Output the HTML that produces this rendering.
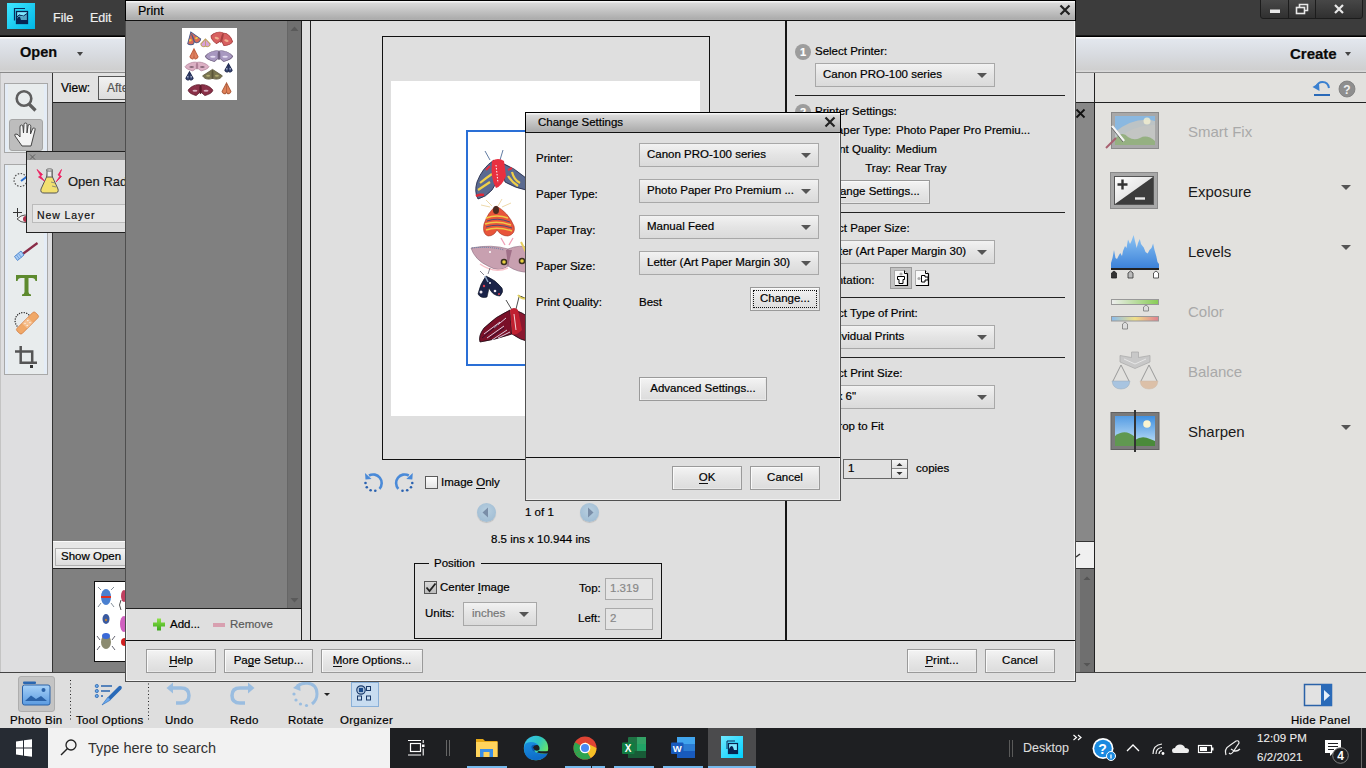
<!DOCTYPE html>
<html><head><meta charset="utf-8">
<style>
*{box-sizing:border-box;margin:0;padding:0}
html,body{width:1366px;height:768px;overflow:hidden;background:#dcdcdc;font-family:"Liberation Sans",sans-serif;color:#000;-webkit-text-stroke:0.2px currentColor}
.a{position:absolute}
.t{position:absolute;white-space:nowrap;line-height:1}
.btn{position:absolute;border:1px solid #9a9a9a;box-shadow:inset 1px 1px 0 #fafafa,inset -1px -1px 0 #e8e8e8;background:linear-gradient(#f4f4f4,#e6e6e6 50%,#dcdcdc);font-size:11.5px;text-align:center;color:#000;line-height:1}
.dd{position:absolute;border:1px solid #a8a8a8;background:linear-gradient(#f2f2f2,#e4e4e4 50%,#dadada);font-size:11.5px;color:#000;line-height:1}
.dd .v{position:absolute;left:7px;top:5px;white-space:nowrap}
.arr{position:absolute;width:0;height:0;border-left:5px solid transparent;border-right:5px solid transparent;border-top:5px solid #555}
.sep{position:absolute;height:1px;background:#222}
u{text-decoration:none;border-bottom:1px solid #111}
</style></head><body>
<svg width="0" height="0" style="position:absolute"><defs>
<path id="mw" d="M0 -0.7 C-0.3 -0.9 -0.8 -0.5 -1 0.1 C-0.95 0.6 -0.6 0.8 -0.35 0.95 L0 0.35 L0.35 0.95 C0.6 0.8 0.95 0.6 1 0.1 C0.8 -0.5 0.3 -0.9 0 -0.7Z"/>
<path id="mo" d="M0 -0.8 L-1 0.2 C-0.9 0.6 -0.5 0.9 0 0.6 C0.5 0.9 0.9 0.6 1 0.2 Z"/>
<path id="mt" d="M0 -1 L-0.95 0.55 C-0.8 0.9 -0.4 1 -0.2 0.9 L0 0.6 L0.2 0.9 C0.4 1 0.8 0.9 0.95 0.55 Z"/>
</defs></svg>

<!-- ===== PSE title bar ===== -->
<div class="a" style="left:0;top:0;width:1366px;height:36px;background:#3c3c3c"></div>
<div class="a" style="left:0;top:35px;width:1366px;height:2px;background:linear-gradient(#1a1a1a 50%,#000 50%)"></div>
<div class="a" style="left:7px;top:3px;width:28px;height:26px;background:linear-gradient(135deg,#3fe6ff,#00b6e6)"></div>
<div class="t" style="left:53px;top:12px;font-size:12.5px;color:#f0f0f0">File</div>
<div class="t" style="left:90px;top:12px;font-size:12.5px;color:#f0f0f0">Edit</div>
<!-- window controls -->
<div class="a" style="left:1260px;top:-3px;width:103px;height:22px;border:1px solid #1c1c1c;border-radius:3px;background:linear-gradient(#4a4a4a,#303030)"></div>
<div class="a" style="left:1288px;top:0;width:1px;height:18px;background:#1c1c1c"></div>
<div class="a" style="left:1315px;top:0;width:1px;height:18px;background:#1c1c1c"></div>
<svg class="a" style="left:1260px;top:0;overflow:visible" width="104" height="20" viewBox="1260 0 104 20"><rect x="1270" y="9.5" width="10" height="3.5" fill="#e8e8e8"/><rect x="1296.5" y="7.5" width="8" height="6" fill="none" stroke="#e8e8e8" stroke-width="1.6"/><path d="M1299.5 7V4.5H1307.5V10.5H1305" fill="none" stroke="#e8e8e8" stroke-width="1.6"/><path d="M1335 5L1343 13M1343 5L1335 13" stroke="#e8e8e8" stroke-width="2.2"/></svg>

<!-- ===== PSE header ===== -->
<div class="a" style="left:0;top:37px;width:1366px;height:35px;background:linear-gradient(#fbfbfb 0,#fbfbfb 1px,#e3e7ee 2px,#d8dbe0 50%,#cfcfcf 33px,#dadada 34px)"></div>
<div class="a" style="left:0;top:72px;width:1366px;height:1px;background:#8a8a8a"></div>
<div class="t" style="left:20px;top:45px;font-size:14.5px;font-weight:700;color:#0a0a0a">Open</div>
<div class="arr" style="left:77px;top:52px;border-left-width:3.5px;border-right-width:3.5px;border-top-width:4px;border-top-color:#444"></div>
<div class="t" style="left:1290px;top:45.5px;font-size:15px;font-weight:700;color:#0a0a0a">Create</div>
<div class="arr" style="left:1345px;top:52px;border-left-width:3.5px;border-right-width:3.5px;border-top-width:4px;border-top-color:#444"></div>

<!-- ===== PSE left toolbar ===== -->
<div class="a" style="left:0;top:73px;width:52px;height:600px;background:#dedee0;border-left:1px solid #c4c4c4"></div>
<div class="a" style="left:52px;top:73px;width:1px;height:600px;background:#333"></div>
<div class="a" style="left:4px;top:83px;width:44px;height:70px;background:#e8eced;border:1px solid #a8a8a8;box-shadow:inset 3px 0 0 #e4ecf6,inset -3px 0 0 #e4ecf6"></div>
<div class="a" style="left:9px;top:119px;width:34px;height:32px;background:#bdbdbd;border:1px solid #a5a5a5;border-radius:3px"></div>
<div class="a" style="left:4px;top:164px;width:44px;height:211px;background:#e8eced;border:1px solid #a8a8a8;box-shadow:inset 3px 0 0 #e4ecf6,inset -3px 0 0 #e4ecf6"></div>

<svg class="a" style="left:7px;top:3px;overflow:visible" width="28" height="26" viewBox="7 3 28 26"><path d="M14.5 20.5V8.5H25" fill="none" stroke="#0a2a5a" stroke-width="1.2"/><rect x="16.5" y="11.5" width="11" height="12" fill="#7fe8ff" stroke="#062452" stroke-width="1.3"/><path d="M17 20 L17 17 Q19 13 21 16 Q23 19 26 14 L27 14 L27 24 L17 24Z" fill="#062452" opacity="0.35"/><path d="M17 24V19Q18 16 20 17L21 20H27V24Z" fill="#062452"/><path d="M17 17Q19 13.5 21 15.5Q23 17.5 27 13.5" fill="none" stroke="#062452" stroke-width="1"/></svg>
<svg class="a" style="left:12px;top:86px;overflow:visible" width="28" height="28" viewBox="12 86 28 28"><circle cx="24" cy="98.5" r="7.3" fill="none" stroke="#5e5e5e" stroke-width="2.6"/><path d="M29 104L35.5 110.5" stroke="#5e5e5e" stroke-width="3.2" stroke-linecap="butt"/></svg>
<svg class="a" style="left:12px;top:122px;overflow:visible" width="30" height="28" viewBox="12 122 30 28"><path d="M22 146 L15 136 Q14 134 16 134 Q18 134 20 137 L20 127 Q20 125 21.5 125 Q23 125 23 127 L23.5 133 L24 124.5 Q24 123 25.5 123 Q27 123 27 124.5 L27 133 L28 126 Q28 124.5 29.5 124.5 Q31 125 30.8 126.5 L30.5 134 L32.5 129 Q33 127.5 34.5 128 Q35.5 128.5 35 130 L32 142 L31 146 Z" fill="#f4f4f4" stroke="#444" stroke-width="1"/></svg>
<svg class="a" style="left:10px;top:170px;overflow:visible" width="24" height="20" viewBox="10 170 24 20"><circle cx="20.5" cy="180" r="6.5" fill="none" stroke="#555" stroke-width="1.2" stroke-dasharray="1.5 1.5"/><path d="M21 181L29 175" stroke="#2a6fd0" stroke-width="2"/></svg>
<svg class="a" style="left:10px;top:205px;overflow:visible" width="26" height="22" viewBox="10 205 26 22"><path d="M13 212.5H22M17.5 208V217" stroke="#333" stroke-width="1"/><path d="M17 219Q25 211 33 219Q25 226 17 219Z" fill="#f4f4f4" stroke="#555" stroke-width="1"/><circle cx="26" cy="219" r="3" fill="#b0304a"/></svg>
<svg class="a" style="left:12px;top:240px;overflow:visible" width="28" height="26" viewBox="12 240 28 26"><path d="M22 254.5L37.5 243" stroke="#8a2c48" stroke-width="2.2"/><path d="M14.5 256.5L21 251L24 255L17.5 260.5Z" fill="#a8cdf5" stroke="#4a82cc" stroke-width="0.9"/><path d="M16.5 255L19.5 259M18.5 253.5L21.5 257.5" stroke="#4a82cc" stroke-width="0.6"/></svg>
<svg class="a" style="left:12px;top:270px;overflow:visible" width="30" height="30" viewBox="12 270 30 30"><path d="M16 275H37V281H35.5Q35 278 32 278H28.5V292Q28.5 294 31 294.5V296H22V294.5Q24.5 294 24.5 292V278H21Q18 278 17.5 281H16Z" fill="#5d8a2e"/></svg>
<svg class="a" style="left:12px;top:306px;overflow:visible" width="30" height="30" viewBox="12 306 30 30"><path d="M17 326A6.8 6.8 0 1 1 29.5 315.5" fill="none" stroke="#333" stroke-width="1.4" stroke-dasharray="0.1 2.3" stroke-linecap="round"/><g transform="rotate(-45 27.5 323)"><rect x="14.5" y="319.3" width="26" height="7.4" rx="2" fill="#f0a868" stroke="#d07a40" stroke-width="0.7"/><rect x="23.5" y="319.6" width="8" height="6.8" fill="#f6c090"/><circle cx="25.5" cy="321.5" r=".6" fill="#fff"/><circle cx="29.5" cy="321.5" r=".6" fill="#fff"/><circle cx="25.5" cy="324.5" r=".6" fill="#fff"/><circle cx="29.5" cy="324.5" r=".6" fill="#fff"/></g></svg>
<svg class="a" style="left:12px;top:342px;overflow:visible" width="30" height="32" viewBox="12 342 30 32"><path d="M20.7 346V362.7H37" fill="none" stroke="#555" stroke-width="2.5"/><path d="M15 351.5H32.2V362" fill="none" stroke="#555" stroke-width="2.5"/><rect x="30" y="365" width="3" height="3" fill="#333"/></svg>
<!-- ===== PSE photo area ===== -->
<div class="a" style="left:53px;top:73px;width:80px;height:29px;background:#e2e2e2"></div>
<div class="a" style="left:53px;top:102px;width:80px;height:1px;background:#222"></div>
<div class="t" style="left:61px;top:82px;font-size:12px">View:</div>
<div class="a" style="left:98px;top:76px;width:40px;height:24px;border:1px solid #555;background:linear-gradient(#f2f2f2,#dcdcdc)"></div>
<div class="t" style="left:107px;top:82px;font-size:12px;color:#555">After</div>
<div class="a" style="left:53px;top:103px;width:80px;height:439px;background:#808080"></div>
<div class="a" style="left:53px;top:541px;width:80px;height:28px;background:#e6e6e6;border-top:1px solid #fafafa;border-bottom:1px solid #222"></div>
<div class="a" style="left:55px;top:548px;width:80px;height:18px;border:1px solid #b0b0b0;background:linear-gradient(#f4f4f4,#dcdcdc)"></div>
<div class="t" style="left:61px;top:551px;font-size:11.5px">Show Open</div>
<div class="a" style="left:53px;top:569px;width:80px;height:104px;background:#808080"></div>
<svg class="a" style="left:94px;top:581px;overflow:visible" width="32" height="81" viewBox="94 581 32 81"><rect x="94.5" y="581.5" width="40" height="80" fill="#fff" stroke="#111"/><ellipse cx="106" cy="597" rx="5" ry="8" fill="#4a80d0"/><rect x="101" y="596" width="10" height="2" fill="#e03020"/><path d="M101 590L98 587M111 590L114 587M101 603L98 607M111 603L114 607" stroke="#345" stroke-width="0.6"/><ellipse cx="106" cy="619" rx="3.5" ry="5" fill="#3a5aa0"/><circle cx="106" cy="620" r="1.2" fill="#c08030"/><ellipse cx="106" cy="642" rx="5" ry="7" fill="#8a8a70"/><ellipse cx="106" cy="636" rx="4" ry="3" fill="#3a6ad8"/><path d="M100 640L97 636M112 640L115 636M100 646L97 650M112 646L115 650" stroke="#223" stroke-width="0.7"/><ellipse cx="124" cy="596" rx="3" ry="6" fill="#c04060"/><ellipse cx="124" cy="624" rx="4" ry="8" fill="#d060c0"/><path d="M121 610Q118 605 121 600" stroke="#222" fill="none" stroke-width="0.8"/><circle cx="125" cy="642" r="4" fill="#d02020"/></svg>

<!-- Open Radial panel -->
<div class="a" style="left:26px;top:151px;width:110px;height:82px;background:#dcdcdc;border:1px solid #222"></div>
<div class="a" style="left:27px;top:152px;width:108px;height:8px;background:#9a9a9a"></div>
<svg class="a" style="left:28px;top:153px;overflow:visible" width="10" height="8" viewBox="28 153 10 8"><path d="M30 154.5L35 159.5M35 154.5L30 159.5" stroke="#555" stroke-width="0.9"/></svg><svg class="a" style="left:36px;top:168px;overflow:visible" width="26" height="27" viewBox="36 168 26 27"><path d="M48 170L52 170L52 176L58 189Q59 193 55 193L44 193Q40 193 41 189L47 176Z" fill="#f2e070" stroke="#555" stroke-width="1"/><path d="M46.5 177L52.5 177L52 176V170H47V176Z" fill="#eee" stroke="#555" stroke-width="1"/><ellipse cx="49.5" cy="170" rx="3.2" ry="1.2" fill="#ddd" stroke="#555" stroke-width="0.8"/><path d="M51 182L55 183M52 186L56 187" stroke="#777" stroke-width="0.8"/><path d="M37 169.5L42.5 174.5L40.5 176L44.5 181L38.5 177L40.5 175.5Z" fill="#ee2060" stroke="#ee2060" stroke-width="0.8" stroke-linejoin="round"/><path d="M61.5 169.5L58 175L60 176L56 182L61.5 176.5L59.5 175Z" fill="#ee2060" stroke="#ee2060" stroke-width="0.8" stroke-linejoin="round"/></svg><div class="t" style="left:68px;top:175px;font-size:13px;color:#1a1a1a">Open Radial</div>
<div class="a" style="left:32px;top:204px;width:100px;height:19px;background:#e6e6e6;border:1px solid #bbb"></div>
<div class="t" style="left:37px;top:210px;font-size:10.5px;letter-spacing:0.9px;color:#111">New Layer</div>

<!-- ===== PSE right panel ===== -->
<div class="a" style="left:1076px;top:73px;width:290px;height:600px;background:#e2e1de"></div>
<div class="a" style="left:1076px;top:73px;width:18px;height:29px;background:#e0e0e0"></div>
<div class="a" style="left:1076px;top:102px;width:18px;height:439px;background:#888"></div>
<div class="a" style="left:1094px;top:73px;width:1px;height:600px;background:#222"></div>
<div class="a" style="left:1076px;top:102px;width:290px;height:1px;background:#222"></div>
<div class="a" style="left:1076px;top:541px;width:18px;height:28px;background:#f0f0f0;border-top:1px solid #333;border-bottom:1px solid #333"></div>
<div class="a" style="left:1076px;top:569px;width:18px;height:104px;background:#888"></div>
<div class="a" style="left:1080px;top:569px;width:14px;height:104px;background:#6f6f6f"></div>

<div class="t" style="left:1188px;top:124px;font-size:15px;color:#a9a9a9;-webkit-text-stroke:0">Smart Fix</div>
<div class="t" style="left:1188px;top:184px;font-size:15px;color:#1a1a1a;-webkit-text-stroke:0">Exposure</div>
<div class="t" style="left:1188px;top:244px;font-size:15px;color:#1a1a1a;-webkit-text-stroke:0">Levels</div>
<div class="t" style="left:1188px;top:304px;font-size:15px;color:#a9a9a9;-webkit-text-stroke:0">Color</div>
<div class="t" style="left:1188px;top:364px;font-size:15px;color:#a9a9a9;-webkit-text-stroke:0">Balance</div>
<div class="t" style="left:1188px;top:424px;font-size:15px;color:#1a1a1a;-webkit-text-stroke:0">Sharpen</div>

<svg width="0" height="0" style="position:absolute"><defs><linearGradient id="gsky" x1="0" y1="0" x2="0" y2="1"><stop offset="0" stop-color="#3d8fe0"/><stop offset="1" stop-color="#c8e4f8"/></linearGradient><linearGradient id="ghist" x1="0" y1="0" x2="0" y2="1"><stop offset="0" stop-color="#8cc4f4"/><stop offset="1" stop-color="#3a80d8"/></linearGradient><linearGradient id="ggrn" x1="0" y1="0" x2="1" y2="0"><stop offset="0" stop-color="#eeeeee"/><stop offset="1" stop-color="#88cc55"/></linearGradient><linearGradient id="grbw" x1="0" y1="0" x2="1" y2="0"><stop offset="0" stop-color="#88bbee"/><stop offset="0.5" stop-color="#f0e088"/><stop offset="1" stop-color="#e08090"/></linearGradient><linearGradient id="gexp" x1="0" y1="0" x2="1" y2="1"><stop offset="0" stop-color="#ffffff"/><stop offset="1" stop-color="#d0d0d0"/></linearGradient></defs></svg>
<svg class="a" style="left:1105px;top:110px;overflow:visible" width="58" height="42" viewBox="1105 110 58 42"><rect x="1111.5" y="112.5" width="47" height="36" fill="#a8a8a8" stroke="#8a8a8a"/><rect x="1115" y="116" width="40" height="29" fill="#b8c8d4"/><path d="M1115 116H1155V125Q1135 124 1115 140Z" fill="#8ab8e0"/><path d="M1115 132Q1135 116 1155 121V145H1115Z" fill="#c4c4c0" opacity="0.85"/><circle cx="1147" cy="121" r="3.5" fill="#f4f0d0" opacity="0.8"/><path d="M1115 145V139Q1122 130 1128 137Q1134 141 1140 138Q1147 134 1155 141V145Z" fill="#8aaa70" opacity="0.8"/><path d="M1106 148L1116 138" stroke="#a86070" stroke-width="2"/><path d="M1112 126L1124 141" stroke="#f4f4f4" stroke-width="2.5"/><path d="M1111.5 127.5L1123 142" stroke="#555" stroke-width="0.8"/></svg>
<svg class="a" style="left:1108px;top:170px;overflow:visible" width="52" height="42" viewBox="1108 170 52 42"><rect x="1110.5" y="172.5" width="47" height="36" fill="#a8a8a8" stroke="#8a8a8a"/><rect x="1114.5" y="176.5" width="39" height="28" fill="url(#gexp)" stroke="#555" stroke-width="1"/><path d="M1115 204L1153 177V204Z" fill="#3c3c3c"/><path d="M1117.5 184.5H1127.5M1122.5 179.5V189.5" stroke="#333" stroke-width="2.4"/><path d="M1135 198.5H1145" stroke="#e8e8e8" stroke-width="2.4"/></svg>
<svg class="a" style="left:1108px;top:232px;overflow:visible" width="54" height="50" viewBox="1108 232 54 50"><path d="M1111 269L1111 263L1112.5 258L1114 250L1115.5 258L1117 259L1119 255L1120.3 253L1122 256L1123 251L1125 246L1126.5 248L1128 239.5L1130 244L1131.5 241L1133.6 235L1135 241L1136.7 248L1138 243L1139.8 239L1141 244L1142.5 246L1143.75 247.5L1145.5 252L1147.7 253.5L1149.5 250L1151.5 248L1153.1 243.5L1154.5 250L1156.25 256L1157.5 262L1159 264V269Z" fill="url(#ghist)"/><rect x="1111" y="268" width="48" height="2" fill="#222"/><path d="M1111.5 278V273L1114 271L1116.5 273V278Z" fill="#333" stroke="#222" stroke-width="0.8"/><path d="M1128 278V273L1130.5 271L1133 273V278Z" fill="#bbb" stroke="#333" stroke-width="0.8"/><path d="M1153.5 278V273L1156 271L1158.5 273V278Z" fill="#fff" stroke="#333" stroke-width="0.8"/></svg>
<svg class="a" style="left:1108px;top:296px;overflow:visible" width="54" height="36" viewBox="1108 296 54 36"><rect x="1111.5" y="299.5" width="47" height="5" fill="url(#ggrn)" stroke="#999"/><rect x="1111.5" y="316.5" width="47" height="4.5" fill="url(#grbw)" stroke="#999"/><path d="M1143.5 311V307L1146 305L1148.5 307V311Z" fill="#ddd" stroke="#777" stroke-width="0.8"/><path d="M1122.5 329V324L1125 322L1127.5 324V329Z" fill="#ddd" stroke="#777" stroke-width="0.8"/></svg>
<svg class="a" style="left:1108px;top:350px;overflow:visible" width="54" height="42" viewBox="1108 350 54 42"><path d="M1131.5 352H1138.5V357.5L1150 355.5V362L1135 368.5L1120 362V355.5L1131.5 357.5Z" fill="#c8c8c8" stroke="#a8a8a8" stroke-width="0.7"/><path d="M1124 359L1135 364L1146 359" fill="none" stroke="#eee" stroke-width="0.8"/><path d="M1121 365L1113 381M1121 365L1129 381M1149 365L1141 381M1149 365L1157 381" stroke="#999" stroke-width="1"/><path d="M1112 381H1130Q1129 389 1121 389Q1113 389 1112 381Z" fill="#a8c4e0" stroke="#9ab" stroke-width="0.5"/><path d="M1140 381H1158Q1157 389 1149 389Q1141 389 1140 381Z" fill="#dcc0a8" stroke="#cba" stroke-width="0.5"/></svg>
<svg class="a" style="left:1108px;top:408px;overflow:visible" width="54" height="48" viewBox="1108 408 54 48"><rect x="1111" y="412.5" width="48" height="37" fill="#7a7a7a" stroke="#606060"/><rect x="1115" y="416" width="40" height="30" fill="url(#gsky)"/><circle cx="1147" cy="424" r="3.8" fill="#faf4d0"/><path d="M1115 446V436Q1125 428 1135 437L1135 446Z" fill="#4a8a3a"/><path d="M1135 446V440Q1142 435 1150 439L1155 441V446Z" fill="#4a8a3a"/><rect x="1115" y="416" width="20" height="30" fill="#fff" opacity="0.12"/><rect x="1134" y="410" width="2" height="42" fill="#333"/></svg>
<div class="arr" style="left:1341px;top:185px;border-left-width:5px;border-right-width:5px;border-top-width:5px;border-top-color:#555"></div>
<div class="arr" style="left:1341px;top:245px;border-left-width:5px;border-right-width:5px;border-top-width:5px;border-top-color:#555"></div>
<div class="arr" style="left:1341px;top:425px;border-left-width:5px;border-right-width:5px;border-top-width:5px;border-top-color:#555"></div>
<svg class="a" style="left:1310px;top:78px;overflow:visible" width="48" height="22" viewBox="1310 78 48 22"><path d="M1316 87Q1318 82 1322.5 82Q1328 82 1329 88" fill="none" stroke="#3a80d0" stroke-width="2"/><path d="M1312.5 87L1319 83L1319.5 91Z" fill="#3a80d0"/><rect x="1314" y="94" width="16" height="2" fill="#2a6ab8"/><circle cx="1347" cy="89" r="8" fill="#8e8e8e" stroke="#7a7a7a" stroke-width="0.8"/><text x="1347" y="93.5" font-family="Liberation Sans" font-weight="700" font-size="12" fill="#f0f0f0" text-anchor="middle">?</text></svg>
<svg class="a" style="left:1075px;top:107px;overflow:visible" width="12" height="12" viewBox="1075 107 12 12"><path d="M1076.5 109.5L1084.5 117.5M1084.5 109.5L1076.5 117.5" stroke="#111" stroke-width="1.8"/></svg>
<svg class="a" style="left:1076px;top:545px;overflow:visible" width="18" height="20" viewBox="1076 545 18 20"><path d="M1076 557L1080 554" stroke="#333" stroke-width="1.5"/></svg>
<svg class="a" style="left:1080px;top:572px;overflow:visible" width="14" height="100" viewBox="1080 572 14 100"><path d="M1083.5 580L1087 576.5L1090.5 580Z" fill="#555"/><path d="M1083.5 663L1087 666.5L1090.5 663Z" fill="#555"/></svg>
<!-- ===== PSE bottom bar ===== -->
<div class="a" style="left:0;top:672px;width:1366px;height:1px;background:#444"></div>
<div class="a" style="left:0;top:673px;width:1366px;height:55px;background:#dedede"></div>
<div class="a" style="left:18px;top:676px;width:37px;height:36px;background:#c4c4c4;border:1px solid #aeaeae;border-radius:3px"></div>
<div class="t" style="left:10px;top:715px;font-size:11.5px;letter-spacing:0.3px">Photo Bin</div>
<div class="t" style="left:76px;top:715px;font-size:11.5px;letter-spacing:0.3px">Tool Options</div>
<div class="t" style="left:165px;top:715px;font-size:11.5px;letter-spacing:0.3px">Undo</div>
<div class="t" style="left:230px;top:715px;font-size:11.5px;letter-spacing:0.3px">Redo</div>
<div class="t" style="left:288px;top:715px;font-size:11.5px;letter-spacing:0.3px">Rotate</div>
<div class="t" style="left:340px;top:715px;font-size:11.5px;letter-spacing:0.3px">Organizer</div>
<div class="t" style="left:1291px;top:715px;font-size:11.5px;letter-spacing:0.3px">Hide Panel</div>

<svg width="0" height="0" style="position:absolute"><defs><linearGradient id="gfold" x1="0" y1="0" x2="0" y2="1"><stop offset="0" stop-color="#a8d2f8"/><stop offset="1" stop-color="#5a9ae0"/></linearGradient></defs></svg>
<svg class="a" style="left:20px;top:679px;overflow:visible" width="34" height="30" viewBox="20 679 34 30"><rect x="23" y="681.5" width="13" height="2.5" rx="1" fill="#2a66b0"/><rect x="22.5" y="685" width="27.5" height="20" rx="2" fill="url(#gfold)" stroke="#2a62a8" stroke-width="1"/><path d="M25 701L31 695.5L36 699L41 696L47 701Z" fill="#2a62a8"/><circle cx="43.5" cy="690" r="2" fill="#2a62a8"/></svg>
<svg class="a" style="left:68px;top:676px;overflow:visible" width="4" height="48" viewBox="68 676 4 48"><path d="M70.5 680V722" stroke="#222" stroke-width="1" stroke-dasharray="1 2.5"/></svg>
<svg class="a" style="left:146px;top:676px;overflow:visible" width="4" height="48" viewBox="146 676 4 48"><path d="M148.5 680V722" stroke="#222" stroke-width="1" stroke-dasharray="1 2.5"/></svg>
<svg class="a" style="left:92px;top:682px;overflow:visible" width="32" height="26" viewBox="92 682 32 26"><circle cx="96.8" cy="686" r="1.6" fill="#6aa8e8" stroke="#2a66b0" stroke-width="0.8"/><circle cx="96.8" cy="691" r="1.6" fill="#6aa8e8" stroke="#2a66b0" stroke-width="0.8"/><circle cx="96.8" cy="696" r="1.6" fill="#6aa8e8" stroke="#2a66b0" stroke-width="0.8"/><path d="M101 686H112M101 691H110M101 696H103" stroke="#2a66b0" stroke-width="1.4"/><path d="M108 697L118.5 686.5Q120 685 121.5 686.5Q122.5 688 121 689.5L110.5 700Z" fill="#2a6ab8"/><path d="M108 697L110.5 700L102 705Z" fill="#6aaaf0" stroke="#2a6ab8" stroke-width="0.6"/></svg>
<svg class="a" style="left:164px;top:680px;overflow:visible" width="30" height="28" viewBox="164 680 30 28"><path d="M171 688H181Q189 688 189 695.5Q189 703 181 703H176" fill="none" stroke="#9abde0" stroke-width="3.5"/><path d="M166.5 688L173 682.5V693.5Z" fill="#9abde0"/></svg>
<svg class="a" style="left:228px;top:680px;overflow:visible" width="30" height="28" viewBox="228 680 30 28"><path d="M250 688H240Q232 688 232 695.5Q232 703 240 703H245" fill="none" stroke="#9abde0" stroke-width="3.5"/><path d="M254.5 688L248 682.5V693.5Z" fill="#9abde0"/></svg>
<svg class="a" style="left:288px;top:680px;overflow:visible" width="46" height="28" viewBox="288 680 46 28"><path d="M297 686Q302 683 307 683Q317 684 317 694Q317 700 312 704" fill="none" stroke="#9abde0" stroke-width="3"/><path d="M293 688L300 682.5L300.5 691Z" fill="#9abde0"/><circle cx="294" cy="694" r="1.6" fill="#9abde0"/><circle cx="296" cy="700" r="1.6" fill="#9abde0"/><circle cx="300.5" cy="704" r="1.6" fill="#9abde0"/><circle cx="306.5" cy="705.5" r="1.6" fill="#9abde0"/><path d="M324 693H330L327 696Z" fill="#222"/></svg>
<svg class="a" style="left:350px;top:681px;overflow:visible" width="30" height="28" viewBox="350 681 30 28"><rect x="351.5" y="682.5" width="27" height="24" fill="#c8dcf0" stroke="#8ab0d8" stroke-width="1"/><circle cx="361" cy="690" r="4.2" fill="none" stroke="#1a3a6a" stroke-width="1.2"/><rect x="358.8" y="687.8" width="4.4" height="4.4" fill="#1a4a8a"/><rect x="366.5" y="686.5" width="4" height="4" fill="none" stroke="#1a3a6a" stroke-width="1"/><rect x="357.5" y="696" width="4" height="4" fill="none" stroke="#1a3a6a" stroke-width="1"/><rect x="366.5" y="696" width="4" height="4" fill="none" stroke="#1a3a6a" stroke-width="1"/></svg>
<svg class="a" style="left:1302px;top:682px;overflow:visible" width="32" height="26" viewBox="1302 682 32 26"><rect x="1304.5" y="684.5" width="27" height="21" fill="#e2e2e2" stroke="#2a62a8" stroke-width="1.5"/><rect x="1321" y="684" width="11" height="22" fill="#2a6ab8"/><path d="M1324 690L1330 695.5L1324 701Z" fill="#e6f0fa"/></svg>
<!-- ===== Taskbar ===== -->
<div class="a" style="left:0;top:728px;width:1366px;height:40px;background:#1e1f22"></div>
<div class="a" style="left:0;top:728px;width:48px;height:40px;background:#262b33"></div>
<div class="a" style="left:48px;top:728px;width:342px;height:40px;background:#f2f2f2"></div>
<div class="t" style="left:88px;top:741px;font-size:14.5px;color:#333;-webkit-text-stroke:0">Type here to search</div>
<div class="t" style="left:1023px;top:742px;font-size:12.5px;color:#ddd;-webkit-text-stroke:0.1px #ddd">Desktop</div>
<div class="t" style="left:1257px;top:733px;font-size:11.5px;letter-spacing:0.1px;color:#eee;-webkit-text-stroke:0.1px #eee">12:09 PM</div>
<div class="t" style="left:1257px;top:752px;font-size:11.5px;letter-spacing:0.1px;color:#eee;-webkit-text-stroke:0.1px #eee">6/2/2021</div>

<svg class="a" style="left:14px;top:738px;overflow:visible" width="20" height="20" viewBox="14 738 20 20"><path d="M16 741.5L23 740.5V747.5H16ZM24 740.3L32 739.2V747.5H24ZM16 748.5H23V755.5L16 754.5ZM24 748.5H32V756.8L24 755.7Z" fill="#fff"/></svg>
<svg class="a" style="left:58px;top:738px;overflow:visible" width="22" height="22" viewBox="58 738 22 22"><circle cx="71" cy="745" r="5" fill="none" stroke="#222" stroke-width="1.3"/><path d="M67.5 748.5L61 755" stroke="#222" stroke-width="1.4"/></svg>
<svg class="a" style="left:406px;top:738px;overflow:visible" width="20" height="20" viewBox="406 738 20 20"><rect x="410.5" y="743.5" width="10" height="8" fill="none" stroke="#fff" stroke-width="1.2"/><path d="M408 740.5H421M408 755H421" stroke="#fff" stroke-width="1.2"/><rect x="422" y="744.5" width="2.5" height="2.5" fill="#fff"/><path d="M423.2 740V743M423.2 748.5V755.5" stroke="#fff" stroke-width="1.1"/></svg>
<div class="a" style="left:446px;top:740px;width:1px;height:16px;background:#666"></div><div class="a" style="left:449px;top:740px;width:1px;height:16px;background:#666"></div>
<svg class="a" style="left:474px;top:737px;overflow:visible" width="26" height="22" viewBox="474 737 26 22"><path d="M476 739H483L485 741H497.5V757H476Z" fill="#e6a817"/><rect x="476" y="742" width="21.5" height="15" fill="#ffd35c"/><path d="M480 757V749H493V757H489.5V752H483.5V757Z" fill="#3a8ee6"/></svg>
<svg class="a" style="left:522px;top:734px;overflow:visible" width="28" height="28" viewBox="522 734 28 28"><defs><linearGradient id="ged1" x1="0" y1="0" x2="1" y2="0.6"><stop offset="0" stop-color="#3ac0f4"/><stop offset="0.55" stop-color="#2ec4c0"/><stop offset="1" stop-color="#6ee860"/></linearGradient><linearGradient id="ged2" x1="0" y1="0" x2="0.3" y2="1"><stop offset="0" stop-color="#1a90e0"/><stop offset="1" stop-color="#0e6cc8"/></linearGradient></defs><circle cx="536" cy="748" r="12.2" fill="url(#ged1)"/><path d="M524 748Q524 742 531 742Q537 742 539 746.5Q535 744 533 747Q531 750.5 536 752.5Q542 754.5 548 753Q545 760 536 760.2Q524 760 524 748Z" fill="url(#ged2)"/><path d="M531.5 746Q534 744 537 745.5Q539 747 539 749Q537 747.5 535.5 748.5Q534 750 535 752Q532 751 531.5 748Z" fill="#0b58b0"/><path d="M533 747.5Q534 744.5 537.5 745Q540 746 539.5 749.5Q538.5 751 537 750.5Q535 751.5 533 747.5Z" fill="#1e1f22"/><path d="M538.5 751Q543 751.5 548.8 751L548.6 753Q543 754.3 537 752.5Z" fill="#1e1f22"/></svg>
<svg class="a" style="left:572px;top:735px;overflow:visible" width="26" height="26" viewBox="572 735 26 26"><circle cx="585" cy="748" r="11.5" fill="#e04434"/><path d="M585 748L575 753.75A11.5 11.5 0 0 0 590.75 757.96Z" fill="#2ea44f"/><path d="M585 748L590.75 757.96A11.5 11.5 0 0 0 596.5 748L585 742.25Z" fill="#f6c026"/><path d="M585 748L575 753.75A11.5 11.5 0 0 1 573.5 748A11.5 11.5 0 0 1 575 742.25Z" fill="#2ea44f"/><circle cx="585" cy="748" r="5.3" fill="#fff"/><circle cx="585" cy="748" r="4" fill="#4a8af4"/></svg>
<svg class="a" style="left:620px;top:736px;overflow:visible" width="28" height="24" viewBox="620 736 28 24"><rect x="628" y="737" width="18" height="21" rx="1" fill="#1f7244"/><rect x="637" y="737" width="9" height="7" fill="#33a266"/><rect x="637" y="744" width="9" height="7" fill="#21a366"/><rect x="628" y="751" width="18" height="7" fill="#185c37"/><rect x="622" y="742.5" width="12.5" height="11.5" rx="1" fill="#107c41"/><text x="628.2" y="752" font-family="Liberation Sans" font-weight="700" font-size="10" fill="#fff" text-anchor="middle">X</text></svg>
<svg class="a" style="left:669px;top:736px;overflow:visible" width="28" height="24" viewBox="669 736 28 24"><rect x="677" y="737" width="18" height="21" rx="1" fill="#2b7cd3"/><rect x="677" y="737" width="18" height="7" fill="#41a5ee"/><rect x="677" y="751" width="18" height="7" fill="#185abd"/><rect x="671" y="742.5" width="12.5" height="11.5" rx="1" fill="#185abd"/><text x="677.2" y="752" font-family="Liberation Sans" font-weight="700" font-size="9.5" fill="#fff" text-anchor="middle">W</text></svg>
<div class="a" style="left:708px;top:728px;width:48px;height:40px;background:#4b4b4d"></div>
<svg class="a" style="left:720px;top:735px;overflow:visible" width="25" height="24" viewBox="720 735 25 24"><defs><linearGradient id="gpse" x1="0" y1="0" x2="1" y2="1"><stop offset="0" stop-color="#70e8ff"/><stop offset="1" stop-color="#00d0ff"/></linearGradient></defs><rect x="721" y="736" width="22" height="22" fill="url(#gpse)"/><path d="M727 749V741H735" fill="none" stroke="#0a2a5a" stroke-width="1"/><rect x="728.5" y="743.5" width="9" height="10" fill="#7fe8ff" stroke="#062452" stroke-width="1.2"/><path d="M729 753.5V749Q731 744.5 733 747L734 750H737V753.5Z" fill="#062452"/></svg>
<div class="a" style="left:467px;top:766px;width:40px;height:2px;background:#76b9ed"></div>
<div class="a" style="left:565px;top:766px;width:40px;height:2px;background:#76b9ed"></div>
<div class="a" style="left:614px;top:766px;width:40px;height:2px;background:#76b9ed"></div>
<div class="a" style="left:663px;top:766px;width:40px;height:2px;background:#76b9ed"></div>
<div class="a" style="left:708px;top:766px;width:48px;height:2px;background:#76b9ed"></div>
<div class="a" style="left:591px;top:766px;width:1px;height:2px;background:#202124"></div>
<div class="a" style="left:1009px;top:740px;width:1px;height:17px;background:#5a5a5a"></div><div class="a" style="left:1012px;top:740px;width:1px;height:17px;background:#5a5a5a"></div><div class="a" style="left:1361px;top:728px;width:1px;height:40px;background:#6a6a6a"></div>
<svg class="a" style="left:1072px;top:733px;overflow:visible" width="12" height="10" viewBox="1072 733 12 10"><path d="M1073.5 735L1076.5 737.5L1073.5 740M1078 735L1081 737.5L1078 740" fill="none" stroke="#fff" stroke-width="1.2"/></svg>
<svg class="a" style="left:1090px;top:736px;overflow:visible" width="26" height="26" viewBox="1090 736 26 26"><circle cx="1103" cy="748.5" r="10.5" fill="#fff"/><circle cx="1103" cy="748.5" r="8.8" fill="#1a8ae0"/><text x="1102.5" y="754" font-family="Liberation Sans" font-weight="700" font-size="14" fill="#fff" text-anchor="middle">?</text><circle cx="1111" cy="756" r="4.5" fill="#1a8ae0" stroke="#fff" stroke-width="1"/><path d="M1111 754.5V758.5" stroke="#fff" stroke-width="1.3"/></svg>
<svg class="a" style="left:1125px;top:742px;overflow:visible" width="16" height="12" viewBox="1125 742 16 12"><path d="M1127 751L1133 745L1139 751" fill="none" stroke="#fff" stroke-width="1.3"/></svg>
<svg class="a" style="left:1150px;top:740px;overflow:visible" width="18" height="16" viewBox="1150 740 18 16"><path d="M1153 754Q1153 745 1162 744M1156 754Q1156 748 1162 747.5M1159 754Q1159 751 1162 750.5" fill="none" stroke="#eee" stroke-width="1.2"/><circle cx="1163" cy="753.5" r="1.4" fill="#fff"/></svg>
<svg class="a" style="left:1170px;top:742px;overflow:visible" width="22" height="14" viewBox="1170 742 22 14"><path d="M1174 753Q1172 753 1172 750.5Q1172 748 1175 748Q1176 744.5 1180 744.5Q1184 744.5 1185 748Q1189 748 1189 750.5Q1189 753 1187 753Z" fill="#eee"/></svg>
<svg class="a" style="left:1195px;top:742px;overflow:visible" width="22" height="14" viewBox="1195 742 22 14"><rect x="1198.5" y="745.5" width="13" height="7" fill="none" stroke="#fff" stroke-width="1.2"/><rect x="1200" y="747" width="7" height="4" fill="#fff"/><rect x="1212" y="747.5" width="1.5" height="3" fill="#fff"/></svg>
<svg class="a" style="left:1222px;top:739px;overflow:visible" width="22" height="20" viewBox="1222 739 22 20"><path d="M1226 755Q1224 749 1229 746L1236 741Q1239 740 1239 743L1233 752Q1231 755 1229 753M1231 749Q1236 753 1240 749" fill="none" stroke="#eee" stroke-width="1.2"/></svg>
<svg class="a" style="left:1322px;top:736px;overflow:visible" width="30" height="26" viewBox="1322 736 30 26"><path d="M1325 740H1341V753H1333L1330 756V753H1325Z" fill="#fff"/><path d="M1328 743.5H1338M1328 746.5H1338M1328 749.5H1334" stroke="#1e1f22" stroke-width="1"/><circle cx="1340.5" cy="755.5" r="7.8" fill="#1e1f22" stroke="#8a8a8a" stroke-width="0.9"/><text x="1340.5" y="760" font-family="Liberation Sans" font-weight="700" font-size="12" fill="#fff" text-anchor="middle">4</text></svg>
<!-- ===== Print dialog ===== -->
<div id="pd" class="a" style="left:125px;top:0;width:951px;height:682px;background:#dfdfdf;border:1px solid #4e4e4e;box-shadow:inset 1px 1px 0 #f2f2f2,inset -1px -1px 0 #f2f2f2"></div><div class="a" style="left:125px;top:0;width:951px;height:21px;border:1px solid #000;border-bottom:none"></div>
<div class="a" style="left:126px;top:1px;width:949px;height:19px;background:linear-gradient(#f4f4f4 0,#f4f4f4 1px,#dadada 2px,#acacac 18px,#b2b2b2 19px)"></div>
<div class="a" style="left:126px;top:20px;width:949px;height:1px;background:#111"></div>
<div class="t" style="left:138px;top:5px;font-size:12.5px;color:#000">Print</div>
<svg class="a" style="left:1059px;top:4px" width="12" height="12" viewBox="0 0 12 12"><path d="M1.5 1.5L10.5 10.5M10.5 1.5L1.5 10.5" stroke="#222" stroke-width="2.2"/></svg>

<!-- left panel -->
<div class="a" style="left:126px;top:21px;width:161px;height:587px;background:#808080"></div>
<div class="a" style="left:287px;top:21px;width:14px;height:587px;background:#6f6f6f;border-left:1px solid #666"></div>
<div class="a" style="left:126px;top:608px;width:175px;height:1px;background:#222"></div><svg class="a" style="left:288px;top:22px;overflow:visible" width="13" height="586" viewBox="288 22 13 586"><path d="M290.5 31L294.5 26.5L298.5 31Z" fill="#5a5a5a"/><path d="M290.5 598L294.5 602.5L298.5 598Z" fill="#5a5a5a"/></svg>
<div class="a" style="left:301px;top:21px;width:1px;height:619px;background:#222"></div>
<div class="a" style="left:310px;top:21px;width:1px;height:619px;background:#222"></div>
<svg class="a" style="left:182px;top:28px;overflow:hidden" width="55" height="72" viewBox="182 28 55 72"><rect x="182" y="28" width="55" height="72" fill="#fff"/><g transform="translate(193 38) rotate(-20) scale(7.225 6.375)"><use href="#mt" fill="#d86a58"/><use href="#mt" fill="none" stroke="#4a5a88" stroke-width="0.1384083044982699"/><ellipse cx="0" cy="0" rx="0.1" ry="0.7" fill="#4a5a88"/><ellipse cx="-0.45" cy="0.2" rx="0.2" ry="0.16" fill="#f0d040"/><ellipse cx="0.45" cy="0.2" rx="0.2" ry="0.16" fill="#f0d040"/></g><g transform="translate(222 38) rotate(15) scale(11.049999999999999 7.225)"><use href="#mw" fill="#d86060"/><use href="#mw" fill="none" stroke="#a84040" stroke-width="0.0904977375565611"/><ellipse cx="0" cy="0" rx="0.1" ry="0.7" fill="#a84040"/><ellipse cx="-0.45" cy="0.2" rx="0.2" ry="0.16" fill="#f0b090"/><ellipse cx="0.45" cy="0.2" rx="0.2" ry="0.16" fill="#f0b090"/></g><g transform="translate(205.5 43) rotate(0) scale(4.675 5.1)"><use href="#mo" fill="#d8a0d8"/><use href="#mo" fill="none" stroke="#c0a060" stroke-width="0.21390374331550802"/><ellipse cx="0" cy="0" rx="0.1" ry="0.7" fill="#c0a060"/></g><g transform="translate(194 54) rotate(0) scale(4.25 5.1)"><use href="#mt" fill="#e08060"/><use href="#mt" fill="none" stroke="#c06040" stroke-width="0.23529411764705882"/><ellipse cx="0" cy="0" rx="0.1" ry="0.7" fill="#c06040"/></g><g transform="translate(219 55.5) rotate(0) scale(13.6 6.375)"><use href="#mw" fill="#a898c0"/><use href="#mw" fill="none" stroke="#706080" stroke-width="0.07352941176470588"/><ellipse cx="0" cy="0" rx="0.1" ry="0.7" fill="#706080"/><ellipse cx="-0.45" cy="0.2" rx="0.2" ry="0.16" fill="#e8e0f4"/><ellipse cx="0.45" cy="0.2" rx="0.2" ry="0.16" fill="#e8e0f4"/></g><g transform="translate(197 66) rotate(0) scale(11.9 5.1)"><use href="#mw" fill="#dcb0c4"/><use href="#mw" fill="none" stroke="#b08098" stroke-width="0.08403361344537814"/><ellipse cx="0" cy="0" rx="0.1" ry="0.7" fill="#b08098"/><ellipse cx="-0.45" cy="0.2" rx="0.2" ry="0.16" fill="#6a5060"/><ellipse cx="0.45" cy="0.2" rx="0.2" ry="0.16" fill="#6a5060"/></g><g transform="translate(228.5 68) rotate(0) scale(3.8249999999999997 4.25)"><use href="#mt" fill="#3a4a78"/><use href="#mt" fill="none" stroke="#202a50" stroke-width="0.26143790849673204"/><ellipse cx="0" cy="0" rx="0.1" ry="0.7" fill="#202a50"/><ellipse cx="-0.45" cy="0.2" rx="0.2" ry="0.16" fill="#e0e0f0"/><ellipse cx="0.45" cy="0.2" rx="0.2" ry="0.16" fill="#e0e0f0"/></g><g transform="translate(189.5 76) rotate(0) scale(3.8249999999999997 4.25)"><use href="#mt" fill="#3a4a78"/><use href="#mt" fill="none" stroke="#202a50" stroke-width="0.26143790849673204"/><ellipse cx="0" cy="0" rx="0.1" ry="0.7" fill="#202a50"/><ellipse cx="-0.45" cy="0.2" rx="0.2" ry="0.16" fill="#e0e0f0"/><ellipse cx="0.45" cy="0.2" rx="0.2" ry="0.16" fill="#e0e0f0"/></g><g transform="translate(212.5 74.5) rotate(0) scale(9.775 6.375)"><use href="#mo" fill="#7a7450"/><use href="#mo" fill="none" stroke="#5a5438" stroke-width="0.10230179028132992"/><ellipse cx="0" cy="0" rx="0.1" ry="0.7" fill="#5a5438"/><ellipse cx="-0.45" cy="0.2" rx="0.2" ry="0.16" fill="#b0aa70"/><ellipse cx="0.45" cy="0.2" rx="0.2" ry="0.16" fill="#b0aa70"/></g><g transform="translate(200.5 89.5) rotate(0) scale(12.325 6.375)"><use href="#mw" fill="#8a3048"/><use href="#mw" fill="none" stroke="#5a1828" stroke-width="0.08113590263691683"/><ellipse cx="0" cy="0" rx="0.1" ry="0.7" fill="#5a1828"/><ellipse cx="-0.45" cy="0.2" rx="0.2" ry="0.16" fill="#d8b0c0"/><ellipse cx="0.45" cy="0.2" rx="0.2" ry="0.16" fill="#d8b0c0"/></g><g transform="translate(226.5 88.5) rotate(0) scale(4.675 5.5249999999999995)"><use href="#mt" fill="#e08058"/><use href="#mt" fill="none" stroke="#b06040" stroke-width="0.21390374331550802"/><ellipse cx="0" cy="0" rx="0.1" ry="0.7" fill="#b06040"/></g></svg>
<div class="t" style="left:170px;top:619px;font-size:11.5px">Add...</div><svg class="a" style="left:152px;top:617px;overflow:visible" width="16" height="16" viewBox="152 617 16 16"><defs><linearGradient id="gpl" x1="0" y1="0" x2="0" y2="1"><stop offset="0" stop-color="#8ee24a"/><stop offset="1" stop-color="#3aa81a"/></linearGradient></defs><path d="M157 618.5H161V622.5H165V626.5H161V630.5H157V626.5H153V622.5H157Z" fill="url(#gpl)"/></svg><div class="a" style="left:213px;top:623px;width:12px;height:4px;background:#d8a0b0"></div>
<div class="t" style="left:230px;top:619px;font-size:11.5px;color:#5a5a5a">Remove</div>

<!-- center preview -->
<div class="a" style="left:382px;top:36px;width:328px;height:424px;border:1px solid #111"></div>
<div class="a" style="left:391px;top:81px;width:309px;height:335px;background:#fff"></div>
<div class="a" style="left:466px;top:130px;width:80px;height:236px;border:2px solid #2a6fd6;background:#fff"></div>
<svg class="a" style="left:468px;top:132px;overflow:hidden" width="76" height="232" viewBox="468 132 76 232"><path d="M490 160L485 151M500 160L503 150" stroke="#3a5a8a" stroke-width="0.8"/><path d="M494 160Q482 168 477 182Q474 192 478 199Q486 197 492 190L498 180Z" fill="#5a6a90" stroke="#1a2040" stroke-width="0.8"/><path d="M500 162Q515 168 526 178L526 190Q515 188 505 182Z" fill="#5a6a90" stroke="#1a2040" stroke-width="0.8"/><path d="M478 190Q484 186 490 182M480 183Q486 178 492 174M512 172Q514 180 520 183M508 176Q512 182 518 186" stroke="#f0d048" stroke-width="2.2" fill="none"/><path d="M476 196Q480 194 484 195" stroke="#e02838" stroke-width="2.5"/><path d="M492 161Q498 157 504 161L506 176Q502 186 496 188Q490 178 492 161Z" fill="#e83040"/><path d="M496 165L498 183" stroke="#fff" stroke-width="1" stroke-dasharray="1.5 1.5"/><path d="M486 170L490 166M508 170L512 168" stroke="#e83040" stroke-width="2"/><path d="M492 206L486 200M498 206L502 199M490 207L481 205M502 207L511 203" stroke="#e0c070" stroke-width="0.6"/><path d="M496 206Q488 212 484 224Q482 234 488 236Q494 236 497 230Q501 236 508 236Q516 234 514 226Q508 212 496 206Z" fill="#e8543a" stroke="#a03020" stroke-width="0.6"/><path d="M486 218Q497 214 508 218M485 224Q497 220 511 225M486 230Q497 226 512 231" stroke="#f0c848" stroke-width="1.4" fill="none"/><path d="M487 221Q497 217 510 222M486 227Q497 223 512 228" stroke="#2a4a80" stroke-width="0.8" fill="none"/><ellipse cx="496" cy="210" rx="3" ry="4" fill="#4a2a20"/><path d="M505 245L501 238M509 245L513 238" stroke="#f0a0b8" stroke-width="1.3"/><path d="M508 249Q492 244 471 248Q475 260 488 266Q500 273 508 266Z" fill="#c8a0b0" stroke="#8a6a80" stroke-width="0.6"/><path d="M508 249Q520 244 530 248V272Q518 273 508 266Z" fill="#c8a0b0" stroke="#8a6a80" stroke-width="0.6"/><path d="M472 248Q490 246 504 250" stroke="#5a80a8" stroke-width="1" fill="none" stroke-dasharray="1 1"/><path d="M480 264Q494 274 508 268" stroke="#f8c0c8" stroke-width="1.4" fill="none"/><circle cx="504" cy="262" r="3.3" fill="#3a3020"/><circle cx="504" cy="262" r="1.8" fill="#e8d040"/><circle cx="522" cy="261" r="3.3" fill="#3a3020"/><circle cx="522" cy="261" r="1.8" fill="#e8d040"/><path d="M506 250L508 266L512 250" fill="#a07088"/><circle cx="490" cy="252" r="1" fill="#fff"/><path d="M484 275L480 271M488 274L490 268" stroke="#334" stroke-width="0.6"/><path d="M486 276Q480 284 478 294Q481 299 487 297L489 288Q493 296 500 296Q504 292 502 288Q496 280 486 276Z" fill="#1a2348" stroke="#0a1020" stroke-width="0.6"/><circle cx="481" cy="292" r="1.5" fill="#f0e8f0"/><circle cx="484" cy="286" r="1.2" fill="#e04050"/><circle cx="495" cy="291" r="1.3" fill="#f0e8f0"/><circle cx="490" cy="283" r="1" fill="#fff"/><circle cx="499" cy="294" r="1" fill="#e04050"/><path d="M485 276L488 282" stroke="#8aa0c0" stroke-width="1.5"/><path d="M512 310L506 300M516 309L519 297" stroke="#222" stroke-width="0.8"/><path d="M510 310Q496 316 484 328Q478 336 480 342Q494 340 512 334Z" fill="#7a1028" stroke="#1a0a14" stroke-width="0.8"/><path d="M514 310Q522 312 530 318V342Q520 340 512 334Z" fill="#8a1830" stroke="#1a0a14" stroke-width="0.8"/><path d="M484 334L500 322M487 338L504 326M492 340L507 330M498 338L510 332M506 318L494 328" stroke="#e8e0f0" stroke-width="0.9"/><path d="M482 338L498 325M490 338L504 328" stroke="#1a1030" stroke-width="0.7"/><path d="M510 310Q514 306 518 310L522 330Q516 336 512 334Z" fill="#c02030"/><path d="M514 314L516 330" stroke="#fff" stroke-width="0.8"/><path d="M521 242Q524 248 526 252" stroke="#e8d060" stroke-width="2"/><path d="M518 295Q522 300 526 298" stroke="#e0d060" stroke-width="2"/></svg>
<svg class="a" style="left:360px;top:468px;overflow:visible" width="60" height="28" viewBox="360 468 60 28"><path d="M369 475.5A8.6 8.6 0 0 1 379.5 488.8" fill="none" stroke="#4a8ad8" stroke-width="2.6"/><path d="M365 473L365.5 479.5L371.5 479Z" fill="#4a8ad8"/><circle cx="375.3" cy="490.8" r="1.3" fill="#2a62b0"/><circle cx="370.6" cy="490.3" r="1.3" fill="#2a62b0"/><circle cx="366.8" cy="487.3" r="1.3" fill="#2a62b0"/><circle cx="365.5" cy="483" r="1.3" fill="#2a62b0"/><path d="M408.8 475.5A8.6 8.6 0 0 0 398.3 488.8" fill="none" stroke="#4a8ad8" stroke-width="2.6"/><path d="M412.8 473L412.3 479.5L406.3 479Z" fill="#4a8ad8"/><circle cx="402.5" cy="490.8" r="1.3" fill="#2a62b0"/><circle cx="407.2" cy="490.3" r="1.3" fill="#2a62b0"/><circle cx="411" cy="487.3" r="1.3" fill="#2a62b0"/><circle cx="412.3" cy="483" r="1.3" fill="#2a62b0"/></svg>
<div class="a" style="left:425px;top:476px;width:13px;height:13px;border:1.5px solid #5a5a5a;background:linear-gradient(#fdfdfd,#e4e4e4)"></div>
<div class="a" style="left:477px;top:503px;width:19px;height:19px;border-radius:50%;background:radial-gradient(circle at 50% 40%,#b8cfe0,#9ab8d0);box-shadow:0 1px 1px rgba(0,0,0,.15)"></div><div class="a" style="left:580px;top:503px;width:19px;height:19px;border-radius:50%;background:radial-gradient(circle at 50% 40%,#b8cfe0,#9ab8d0);box-shadow:0 1px 1px rgba(0,0,0,.15)"></div><svg class="a" style="left:476px;top:503px;overflow:visible" width="125" height="20" viewBox="476 503 125 20"><path d="M482.5 512.5L488 507.5V517.5Z" fill="#7a8ea8"/><path d="M593.5 512.5L588 507.5V517.5Z" fill="#7a8ea8"/></svg>
<div class="t" style="left:441px;top:477px;font-size:11.5px">Image <u>O</u>nly</div>
<div class="t" style="left:525px;top:507px;font-size:11.5px">1 of 1</div>
<div class="t" style="left:491px;top:534px;font-size:11.5px">8.5 ins x 10.944 ins</div>
<!-- position group -->
<div class="a" style="left:414px;top:563px;width:248px;height:76px;border:1px solid #111"></div>
<div class="a" style="left:429px;top:556px;width:52px;height:12px;background:#dfdfdf"></div>
<div class="t" style="left:434px;top:558px;font-size:11.5px">Position</div>
<div class="a" style="left:424px;top:581px;width:13px;height:13px;border:1.5px solid #555;background:linear-gradient(#d8d8d8,#bcbcbc)"></div><svg class="a" style="left:424px;top:581px;overflow:visible" width="14" height="14" viewBox="424 581 14 14"><path d="M426.5 587.5L429.5 591L435.5 583.5" fill="none" stroke="#222" stroke-width="1.8"/></svg>
<div class="t" style="left:440px;top:582px;font-size:11.5px">Center <u>I</u>mage</div>
<div class="t" style="left:425px;top:608px;font-size:11.5px">Units:</div>
<div class="dd" style="left:463px;top:602px;width:74px;height:24px;color:#777"><i class="arr" style="right:7px;top:9px"></i><span class="v" style="left:8px;color:#777">inches</span></div>
<div class="t" style="left:579px;top:583px;font-size:11.5px">Top:</div>
<div class="a" style="left:605px;top:578px;width:48px;height:22px;border:1px solid #aaa;background:#e4e4e4"></div>
<div class="t" style="left:610px;top:583px;font-size:11.5px;color:#888">1.319</div>
<div class="t" style="left:578px;top:613px;font-size:11.5px">Left:</div>
<div class="a" style="left:605px;top:608px;width:48px;height:22px;border:1px solid #aaa;background:#e4e4e4"></div>
<div class="t" style="left:610px;top:613px;font-size:11.5px;color:#888">2</div>

<!-- center/right separator -->
<div class="a" style="left:785px;top:21px;width:2px;height:619px;background:#151515"></div>

<!-- right panel -->
<div class="a" style="left:795px;top:44px;width:16px;height:16px;border-radius:50%;background:#9c9c9c;color:#fff;font-size:11px;font-weight:700;text-align:center;line-height:16px">1</div>
<div class="a" style="left:795px;top:104px;width:16px;height:16px;border-radius:50%;background:#9c9c9c;color:#fff;font-size:11px;font-weight:700;text-align:center;line-height:16px">2</div>
<div class="a" style="left:795px;top:220px;width:16px;height:16px;border-radius:50%;background:#9c9c9c;color:#fff;font-size:11px;font-weight:700;text-align:center;line-height:16px">3</div>
<div class="a" style="left:795px;top:305px;width:16px;height:16px;border-radius:50%;background:#9c9c9c;color:#fff;font-size:11px;font-weight:700;text-align:center;line-height:16px">4</div>
<div class="a" style="left:795px;top:365px;width:16px;height:16px;border-radius:50%;background:#9c9c9c;color:#fff;font-size:11px;font-weight:700;text-align:center;line-height:16px">5</div>
<div class="t" style="left:815px;top:46px;font-size:11.5px">Select Printer:</div>
<div class="dd" style="left:815px;top:63px;width:180px;height:24px"><i class="arr" style="right:7px;top:9px"></i><span class="v">Canon PRO-100 series</span></div>
<div class="sep" style="left:795px;top:95px;width:270px"></div>
<div class="t" style="left:815px;top:106px;font-size:11.5px">Printer Settings:</div>
<div class="t" style="right:475px;top:125px;font-size:11.5px">Paper Type:</div>
<div class="t" style="left:896px;top:125px;font-size:11.5px">Photo Paper Pro Premiu...</div>
<div class="t" style="right:475px;top:144px;font-size:11.5px">Print Quality:</div>
<div class="t" style="left:896px;top:144px;font-size:11.5px">Medium</div>
<div class="t" style="right:475px;top:163px;font-size:11.5px">Tray:</div>
<div class="t" style="left:896px;top:163px;font-size:11.5px">Rear Tray</div>
<div class="btn" style="left:815px;top:180px;width:115px;height:24px;padding-top:5px">Change Settings...</div><div class="a" style="left:841px;top:197px;width:5px;height:1px;background:#000"></div>
<div class="sep" style="left:795px;top:212px;width:270px"></div>
<div class="t" style="left:815px;top:223px;font-size:11.5px">Select Paper Size:</div>
<div class="dd" style="left:815px;top:240px;width:180px;height:24px"><i class="arr" style="right:7px;top:9px"></i><span class="v">Letter (Art Paper Margin 30)</span></div>
<div class="t" style="left:815px;top:275px;font-size:11.5px">Orientation:</div><div class="a" style="left:890px;top:267px;width:22px;height:22px;background:#c2c2c2;border:1px solid #9a9a9a"></div><svg class="a" style="left:893px;top:269px;overflow:visible" width="40" height="20" viewBox="893 269 40 20"><path d="M894.5 270.5H904.5L907.5 273.5V285.5H894.5Z" fill="#f8f8f8" stroke="#888" stroke-width="0.6"/><path d="M895 285.5H907.5V273.5" fill="none" stroke="#000" stroke-width="1.2"/><path d="M904.5 270.5V273.5H907.5" fill="none" stroke="#000" stroke-width="1"/><circle cx="901" cy="274" r="1.6" fill="#aaa"/><path d="M897.5 276.5H904.5V279.5H903V283.5H899V279.5H897.5Z" fill="#fff" stroke="#000" stroke-width="1"/><path d="M915.5 270.5H925.5L928.5 273.5V285.5H915.5Z" fill="#f8f8f8" stroke="#888" stroke-width="0.6"/><path d="M916 285.5H928.5V273.5" fill="none" stroke="#000" stroke-width="1.2"/><path d="M925.5 270.5V273.5H928.5" fill="none" stroke="#000" stroke-width="1"/><circle cx="919" cy="278.5" r="1.6" fill="#aaa"/><path d="M921.5 275.5H925V277H928V280H925V282H921.5Z" fill="#fff" stroke="#000" stroke-width="1"/></svg>
<div class="sep" style="left:795px;top:297px;width:270px"></div>
<div class="t" style="left:815px;top:308px;font-size:11.5px">Select Type of Print:</div>
<div class="dd" style="left:815px;top:325px;width:180px;height:24px"><i class="arr" style="right:7px;top:9px"></i><span class="v">Individual Prints</span></div>
<div class="sep" style="left:795px;top:357px;width:270px"></div>
<div class="t" style="left:815px;top:368px;font-size:11.5px">Select Print Size:</div>
<div class="dd" style="left:815px;top:385px;width:180px;height:24px"><i class="arr" style="right:7px;top:9px"></i><span class="v">4" x 6"</span></div>
<div class="t" style="left:830px;top:421px;font-size:11.5px">Crop to Fit</div>
<div class="a" style="left:843px;top:459px;width:65px;height:20px;border:1px solid #666;background:#e0e0e0"></div>
<div class="t" style="left:848px;top:463px;font-size:11.5px">1</div><div class="a" style="left:891px;top:459px;width:17px;height:20px;border:1px solid #666;background:#e4e4e4"></div><div class="a" style="left:892px;top:460px;width:15px;height:9px;background:linear-gradient(#f6f6f6,#e0e0e0);border-bottom:1px solid #888"></div><div class="a" style="left:892px;top:469px;width:15px;height:9px;background:linear-gradient(#f6f6f6,#e0e0e0)"></div><svg class="a" style="left:892px;top:460px;overflow:visible" width="16" height="18" viewBox="892 460 16 18"><path d="M896.5 466L899.5 463L902.5 466Z" fill="#333"/><path d="M896.5 472L899.5 475L902.5 472Z" fill="#333"/></svg>
<div class="t" style="left:916px;top:463px;font-size:11.5px">copies</div>

<!-- footer -->
<div class="a" style="left:126px;top:640px;width:949px;height:1px;background:#111"></div>
<div class="btn" style="left:146px;top:649px;width:70px;height:24px;padding-top:5px"><u>H</u>elp</div>
<div class="btn" style="left:224px;top:649px;width:89px;height:24px;padding-top:5px">Pa<u>g</u>e Setup...</div>
<div class="btn" style="left:321px;top:649px;width:102px;height:24px;padding-top:5px"><u>M</u>ore Options...</div>
<div class="btn" style="left:907px;top:649px;width:70px;height:24px;padding-top:5px"><u>P</u>rint...</div>
<div class="btn" style="left:985px;top:649px;width:70px;height:24px;padding-top:5px">Cancel</div>

<!-- ===== Change Settings dialog ===== -->
<div class="a" style="left:525px;top:112px;width:316px;height:389px;background:#dfdfdf;border:1px solid #505050;box-shadow:inset -1px -1px 0 #f0f0f0"></div><div class="a" style="left:525px;top:112px;width:316px;height:21px;border:1px solid #000;border-bottom:none"></div>
<div class="a" style="left:526px;top:113px;width:314px;height:19px;background:linear-gradient(#f4f4f4 0,#f4f4f4 1px,#dadada 2px,#acacac 18px,#b2b2b2 19px)"></div>
<div class="a" style="left:526px;top:132px;width:314px;height:1px;background:#111"></div>
<div class="t" style="left:538px;top:117px;font-size:11.5px">Change Settings</div>
<svg class="a" style="left:824px;top:116px" width="12" height="12" viewBox="0 0 12 12"><path d="M1.5 1.5L10.5 10.5M10.5 1.5L1.5 10.5" stroke="#222" stroke-width="2.2"/></svg>
<div class="t" style="left:536px;top:153px;font-size:11.5px">Printer:</div>
<div class="dd" style="left:639px;top:143px;width:180px;height:24px"><i class="arr" style="right:7px;top:9px"></i><span class="v">Canon PRO-100 series</span></div>
<div class="t" style="left:536px;top:189px;font-size:11.5px">Paper Type:</div>
<div class="dd" style="left:639px;top:179px;width:180px;height:24px"><i class="arr" style="right:7px;top:9px"></i><span class="v">Photo Paper Pro Premium ...</span></div>
<div class="t" style="left:536px;top:225px;font-size:11.5px">Paper Tray:</div>
<div class="dd" style="left:639px;top:215px;width:180px;height:24px"><i class="arr" style="right:7px;top:9px"></i><span class="v">Manual Feed</span></div>
<div class="t" style="left:536px;top:261px;font-size:11.5px">Paper Size:</div>
<div class="dd" style="left:639px;top:251px;width:180px;height:24px"><i class="arr" style="right:7px;top:9px"></i><span class="v">Letter (Art Paper Margin 30)</span></div>
<div class="t" style="left:536px;top:297px;font-size:11.5px">Print Quality:</div>
<div class="t" style="left:639px;top:297px;font-size:11.5px">Best</div>
<div class="btn" style="left:750px;top:287px;width:70px;height:24px;padding-top:5px">Change...</div><div class="a" style="left:753px;top:290px;width:64px;height:18px;border:1px dotted #111"></div>
<div class="btn" style="left:639px;top:377px;width:128px;height:24px;padding-top:5px">Advanced Settings...</div>
<div class="a" style="left:526px;top:457px;width:314px;height:1px;background:#111"></div>
<div class="btn" style="left:672px;top:466px;width:70px;height:24px;padding-top:5px"><u>O</u>K</div>
<div class="btn" style="left:750px;top:466px;width:70px;height:24px;padding-top:5px">Cancel</div>

</body></html>
